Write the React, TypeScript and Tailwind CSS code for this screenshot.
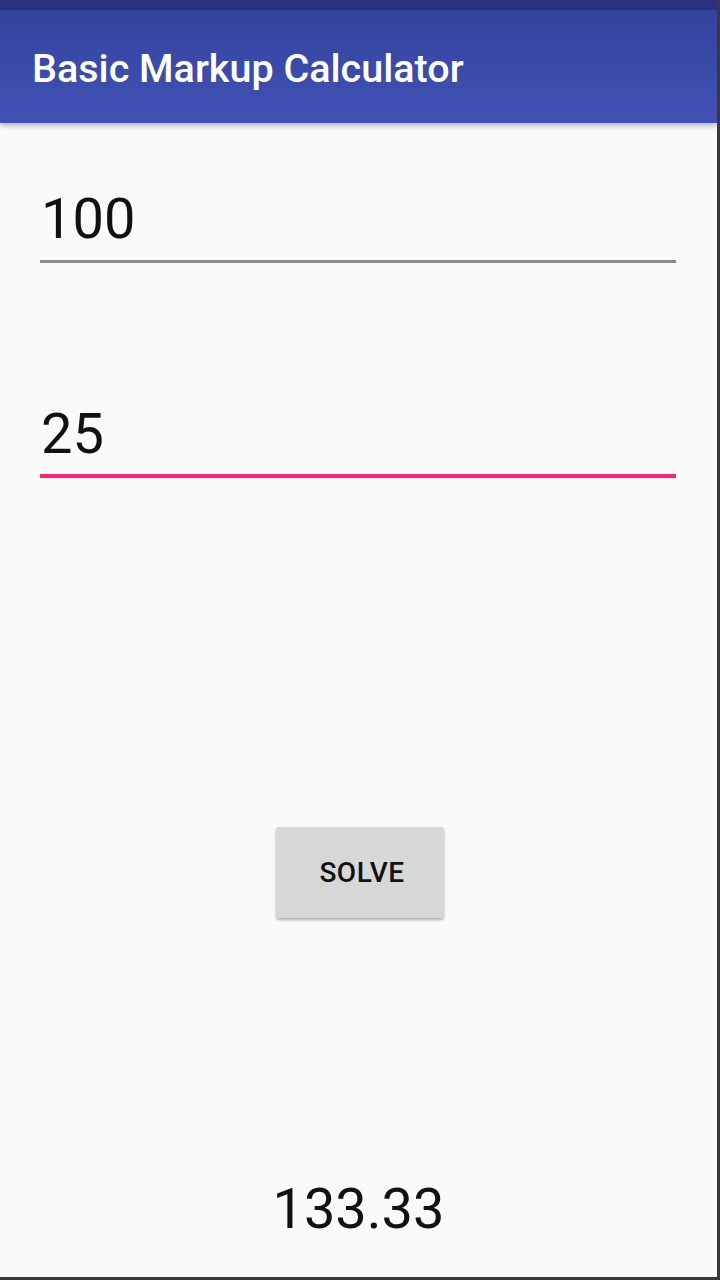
export default function App() {
  return (
    <div
      className="w-[720px] h-[1280px] bg-[#fafafa] flex flex-col overflow-hidden border-r-[3px] border-b-[3px] border-[#3a3a3a]"
      style={{ fontFamily: 'Roboto, "Noto Sans", sans-serif' }}
    >
      <div className="h-[10px] bg-[#28327f] shrink-0" />
      <div className="h-[113px] shrink-0 flex items-center pl-[32px] pt-[4px] bg-gradient-to-b from-[#34439c] to-[#4152b6] shadow-[0_3px_5px_rgba(0,0,0,0.25)] relative z-10">
        <span className="text-white text-[39.5px] font-medium">Basic Markup Calculator</span>
      </div>
      <div className="flex flex-col px-[40px]">
        <div className="mt-[68px] h-[56px] leading-[56px] text-[56px] text-[#111] pl-[1px]">100</div>
        <div className="mt-[13px] h-[3px] w-[636px] bg-[#8a8a8a]" />
        <div className="mt-[143px] h-[56px] leading-[56px] text-[56px] text-[#111] pl-[1px]">25</div>
        <div className="mt-[12px] h-[4px] w-[636px] bg-[#ff2370]" />
      </div>
      <div className="flex justify-center mt-[349px] pl-[3px]">
        <button className="w-[168px] h-[91px] rounded-[3px] bg-[#d6d7d7] shadow-[0_2px_3px_rgba(0,0,0,0.3)] text-[28px] font-medium text-[#111] tracking-[0.5px] pl-[4px]">
          SOLVE
        </button>
      </div>
      <div className="flex justify-center mt-[263px]">
        <div className="h-[56px] leading-[56px] text-[56px] text-[#111]">133.33</div>
      </div>
    </div>
  );
}
